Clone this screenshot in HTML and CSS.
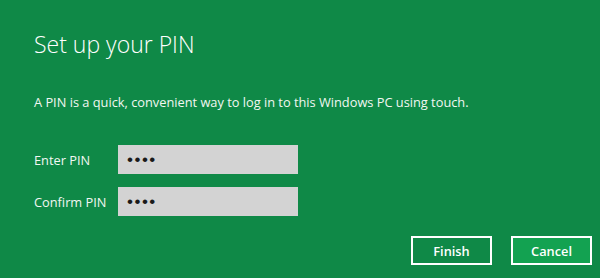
FILE: index.html
```html
<!DOCTYPE html>
<html>
  <head>
    <title>Set up your PIN</title>
    <link rel="stylesheet" href="styles.css">
  </head>
  <body>
    <div class="dialog">
      <h1 class="title">Set up your PIN</h1>
      <p class="intro">A PIN is a quick, convenient way to log in to this Windows PC using touch.</p>

      <div class="fields">
        <div class="field">
          <label for="pin">Enter PIN</label>
          <input type="password" id="pin" value="1234" />
        </div>
        <div class="field">
          <label for="pinConfirm">Confirm PIN</label>
          <input type="password" id="pinConfirm" value="1234" />
        </div>
      </div>

      <div class="actions">
        <button class="btn">Finish</button>
        <button class="btn btn-cancel">Cancel</button>
      </div>
    </div>
  </body>
</html>
```

FILE: styles.css
```css
* {
  margin: 0;
  padding: 0;
  box-sizing: border-box;
}

body {
  font-family: "Open Sans", "Noto Sans", sans-serif;
  background-color: #0f8947;
  color: #f2f7f2;
  width: 600px;
  height: 278px;
  overflow: hidden;
}

.dialog {
  padding: 28px 8px 0 34px;
}

.title {
  font-size: 23px;
  font-weight: 300;
  line-height: 32px;
  color: white;
}

.intro {
  margin-top: 33px;
  font-size: 12.8px;
  line-height: 18px;
}

.fields {
  margin-top: 34px;
  display: flex;
  flex-direction: column;
  gap: 13px;
}

.field {
  display: flex;
  align-items: center;
}

.field label {
  width: 84px;
  font-size: 12.8px;
}

.field input {
  width: 180px;
  height: 29px;
  border: none;
  background: #d3d3d3;
  padding: 0 9px;
  font-size: 17px;
  color: #1a1a1a;
  letter-spacing: 1.5px;
  outline: none;
}

.actions {
  margin-top: 20px;
  display: flex;
  justify-content: flex-end;
  gap: 19px;
}

.btn {
  width: 81px;
  height: 29px;
  border: 2px solid white;
  background: transparent;
  color: white;
  font-family: "Open Sans", "Noto Sans", sans-serif;
  font-size: 12.8px;
  font-weight: 600;
}

.btn-cancel {
  background: #13a251;
}
```
